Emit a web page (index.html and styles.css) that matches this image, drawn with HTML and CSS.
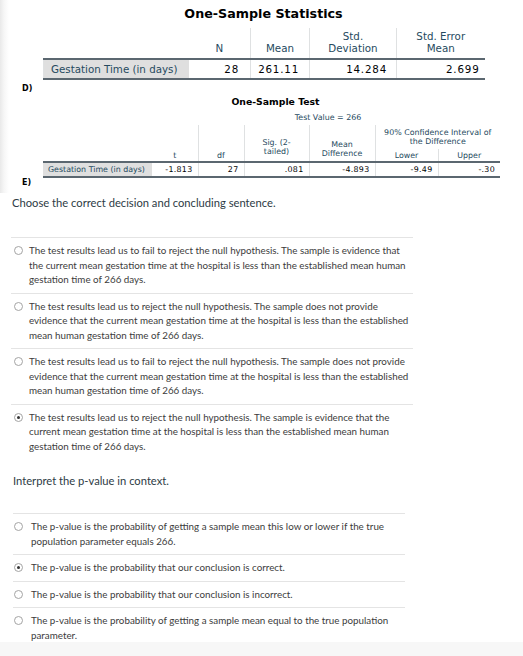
FILE: index.html
```html
<!DOCTYPE html>
<html>
<head>
<meta charset="utf-8">
<link rel="stylesheet" href="styles.css">
</head>
<body>
<div class="spss">
  <div class="title t1">One-Sample Statistics</div>
  <table class="stat">
    <colgroup><col class="c-stub"><col class="c-n"><col class="c-mean"><col class="c-sd"><col class="c-se"></colgroup>
    <thead>
      <tr>
        <th class="stub"></th>
        <th class="first">N</th>
        <th>Mean</th>
        <th>Std.<br>Deviation</th>
        <th>Std. Error<br>Mean</th>
      </tr>
    </thead>
    <tbody>
      <tr>
        <td class="rowh">Gestation Time (in days)</td>
        <td class="first pr12">28</td>
        <td class="pr11">261.11</td>
        <td class="pr10">14.284</td>
        <td class="pr6">2.699</td>
      </tr>
    </tbody>
  </table>
  <div class="label lab-d">D)</div>
  <div class="title t2">One-Sample Test</div>
  <table class="test">
    <colgroup><col class="d-stub"><col class="d-t"><col class="d-df"><col class="d-sig"><col class="d-md"><col class="d-lo"><col class="d-up"></colgroup>
    <thead>
      <tr class="tv">
        <th class="stub"></th>
        <th colspan="6" class="tvcell">Test Value = 266</th>
      </tr>
      <tr class="h1">
        <th class="stub" rowspan="2"></th>
        <th class="first pb1" rowspan="2">t</th>
        <th rowspan="2" class="sep pb1">df</th>
        <th rowspan="2" class="sep pb4">Sig. (2-<br>tailed)</th>
        <th rowspan="2" class="sep pb2">Mean<br>Difference</th>
        <th colspan="2" class="sep ci">90% Confidence Interval of<br>the Difference</th>
      </tr>
      <tr class="h2">
        <th class="sep">Lower</th>
        <th class="sep">Upper</th>
      </tr>
    </thead>
    <tbody>
      <tr>
        <td class="rowh">Gestation Time (in days)</td>
        <td class="first">-1.813</td>
        <td class="sep">27</td>
        <td class="sep">.081</td>
        <td class="sep">-4.893</td>
        <td class="sep">-9.49</td>
        <td class="sep">-.30</td>
      </tr>
    </tbody>
  </table>
  <div class="label lab-e">E)</div>
</div>

<div class="question q1">
  <p class="prompt">Choose the correct decision and concluding sentence.</p>
  <ul class="options opts1">
    <li><span class="radio"></span><span class="otext">The test results lead us to fail to reject the null hypothesis. The sample is evidence that the current mean gestation time at the hospital is less than the established mean human gestation time of 266 days.</span></li>
    <li><span class="radio"></span><span class="otext">The test results lead us to reject the null hypothesis. The sample does not provide evidence that the current mean gestation time at the hospital is less than the established mean human gestation time of 266 days.</span></li>
    <li><span class="radio"></span><span class="otext">The test results lead us to fail to reject the null hypothesis. The sample does not provide evidence that the current mean gestation time at the hospital is less than the established mean human gestation time of 266 days.</span></li>
    <li><span class="radio checked"></span><span class="otext">The test results lead us to reject the null hypothesis. The sample is evidence that the current mean gestation time at the hospital is less than the established mean human gestation time of 266 days.</span></li>
  </ul>
</div>

<div class="question q2">
  <p class="prompt">Interpret the p-value in context.</p>
  <ul class="options opts2">
    <li><span class="radio"></span><span class="otext">The p-value is the probability of getting a sample mean this low or lower if the true population parameter equals 266.</span></li>
    <li><span class="radio checked"></span><span class="otext">The p-value is the probability that our conclusion is correct.</span></li>
    <li><span class="radio"></span><span class="otext">The p-value is the probability that our conclusion is incorrect.</span></li>
    <li><span class="radio"></span><span class="otext">The p-value is the probability of getting a sample mean equal to the true population parameter.</span></li>
  </ul>
</div>
<div class="bottomband"></div>
</body>
</html>
```

FILE: styles.css
```css
html, body {
  margin: 0;
  padding: 0;
  background: #ffffff;
}
body {
  width: 523px;
  height: 656px;
  overflow: hidden;
  position: relative;
  font-family: "Lato", "Open Sans", sans-serif;
  color: #3b3b3b;
}

/* SPSS output image area */
.spss {
  height: 193px;
  width: 510px;
  padding-top: 6px;
  box-sizing: border-box;
  background: linear-gradient(to right, #e9e9e9 0px, #f6f6f6 4px, #ffffff 9px);
  font-family: "DejaVu Sans", "Verdana", sans-serif;
  color: #264a60;
}
.title {
  font-weight: bold;
  color: #000;
  text-align: center;
}
.t1 {
  font-size: 12.7px;
  line-height: 16px;
  width: 441px;
  margin-left: 43px;
  height: 16px;
}
.t2 {
  font-size: 9.3px;
  line-height: 12px;
  width: 457px;
  margin-left: 47px;
  margin-top: 2px;
}

table {
  border-collapse: collapse;
  margin-left: 43px;
  table-layout: fixed;
}
th, td {
  padding: 0;
  font-weight: normal;
}

/* Table 1 */
.stat {
  margin-top: 6px;
  width: 441px;
  font-size: 10.3px;
}
.c-stub { width: 145px; }
.c-n { width: 62px; }
.c-mean { width: 59px; }
.c-sd { width: 87px; }
.c-se { width: 88px; }
.stat thead th {
  height: 31px;
  vertical-align: bottom;
  text-align: center;
  line-height: 11.5px;
  padding-bottom: 4px;
  box-sizing: border-box;
  border-left: 1px solid #dfe1e2;
  border-bottom: 2px solid #5b6770;
}
.stat thead th.stub,
.stat thead th.first { border-left: none; }
.stat tbody td {
  height: 18px;
  text-align: right;
  color: #010205;
  letter-spacing: 0.8px;
  border-left: 1px solid #dfe1e2;
  border-bottom: 2px solid #5b6770;
  line-height: 14px;
}
.stat tbody td.first { border-left: none; }
.pr12 { padding-right: 11px !important; }
.pr11 { padding-right: 10px !important; }
.pr10 { padding-right: 9px !important; }
.pr6 { padding-right: 5px !important; }
td.rowh {
  background: #dfdfdf;
  color: #264a60 !important;
  text-align: left !important;
  padding-left: 7px;
  letter-spacing: 0 !important;
}

.label {
  font-size: 8px;
  font-weight: bold;
  color: #000;
  margin-left: 22px;
  line-height: 10px;
}
.lab-d { margin-top: 4px; }
.lab-e { margin-top: 0; }

/* Table 2 */
.test {
  width: 457px;
  font-size: 7.9px;
}
.d-stub { width: 109px; }
.d-t { width: 46px; }
.d-df { width: 46px; }
.d-sig { width: 65px; }
.d-md { width: 66px; }
.d-lo { width: 63px; }
.d-up { width: 62px; }
.test th {
  text-align: center;
  line-height: 9px;
  vertical-align: bottom;
}
.test tr.tv th {
  height: 14px;
  padding-bottom: 3px;
}
.test .tvcell { padding-left: 4px; }
.test tr.h1 th { height: 21px; }
.test tr.h1 th[rowspan] {
  border-bottom: 2px solid #5b6770;
}
.test .pb1 { padding-bottom: 1px; }
.test .pb2 { padding-bottom: 3px; }
.test .pb4 { padding-bottom: 5px; }
.test tr.h1 th.ci {
  vertical-align: top;
  padding-top: 3px;
}
.test tr.h2 th {
  height: 11px;
  padding-bottom: 1px;
  border-bottom: 2px solid #5b6770;
}
.test .sep { border-left: 1px solid #dfe1e2; }
.test tbody td {
  height: 13px;
  text-align: right;
  padding-right: 5px;
  color: #010205;
  letter-spacing: 0.3px;
  border-bottom: 2px solid #5b6770;
  line-height: 12px;
}
.test tbody td.rowh { padding-left: 5px; }

/* Questions */
.question p { margin: 0; }
.prompt {
  font-size: 11.2px;
  color: #2d3b45;
  line-height: 14px;
}
.q1 .prompt { margin-left: 12px; margin-top: 3px; }
.options {
  list-style: none;
  margin: 0;
  padding: 0;
}
.opts1 {
  margin: 27px 0 0 11px;
  width: 402px;
}
.q2 .prompt { margin-left: 13px; margin-top: 15px; }
.opts2 {
  margin: 25px 0 0 13px;
  width: 392px;
}
.options li {
  display: flex;
  align-items: flex-start;
  gap: 6px;
  border-top: 1px solid #e4e4e4;
  padding: 5px 0 6px 3px;
  font-size: 9.8px;
  line-height: 14.5px;
  color: #3c3c3c;
}
.opts2 li { padding-left: 1px; gap: 8px; }
.radio {
  flex: none;
  width: 9px;
  height: 9px;
  border: 1px solid #a4a4a4;
  border-radius: 50%;
  box-sizing: border-box;
  margin-top: 3px;
  position: relative;
  background: #fff;
}
.radio.checked::after {
  content: "";
  position: absolute;
  left: 2px;
  top: 2px;
  width: 3px;
  height: 3px;
  border-radius: 50%;
  background: #333;
}
.otext { flex: 1; }

.bottomband {
  position: absolute;
  left: 0;
  top: 642px;
  width: 523px;
  height: 14px;
  background: #f7f7f7;
}
```
